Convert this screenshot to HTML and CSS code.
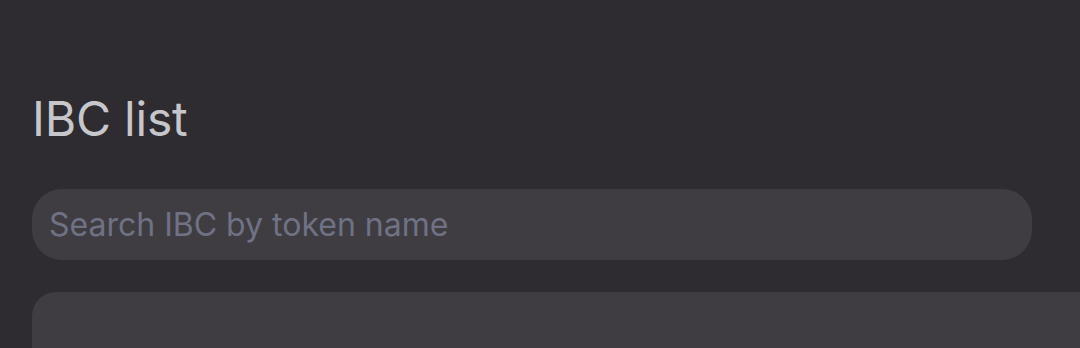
FILE: index.html
```html
<!DOCTYPE html>
<html lang="en">
<head>
<meta charset="utf-8">
<title>IBC list</title>
<link rel="stylesheet" href="styles.css">
</head>
<body>
  <main class="page">
    <h1 class="title">IBC list</h1>
    <div class="search">
      <input class="search-input" type="text" placeholder="Search IBC by token name">
    </div>
    <section class="card"></section>
  </main>
</body>
</html>
```
FILE: styles.css
```css
html, body {
  margin: 0;
  padding: 0;
  height: 100%;
  overflow: hidden;
  background: #2e2c30;
}
body {
  font-family: Inter, "Noto Sans", sans-serif;
}
.page {
  box-sizing: border-box;
  height: 100vh;
  padding: 90px 0 0 32px;
  display: flex;
  flex-direction: column;
  width: 1100px;
}
.title {
  margin: 0;
  font-size: 48px;
  line-height: 58px;
  font-weight: 400;
  color: #c6c6cb;
  letter-spacing: -0.2px;
}
.search {
  margin-top: 41px;
  width: 1000px;
  height: 71px;
  flex: none;
  border-radius: 30px;
  background: #3f3d42;
  display: flex;
  align-items: center;
}
.search-input {
  flex: 1;
  min-width: 0;
  border: none;
  outline: none;
  background: transparent;
  font-family: Inter, "Noto Sans", sans-serif;
  font-size: 32px;
  color: #c6c6cb;
  padding: 0 0 0 17px;
}
.search-input::placeholder {
  color: #6f7284;
}
.card {
  margin-top: 32px;
  flex: 1;
  border-radius: 24px 24px 0 0;
  background: #3f3d42;
}
```
